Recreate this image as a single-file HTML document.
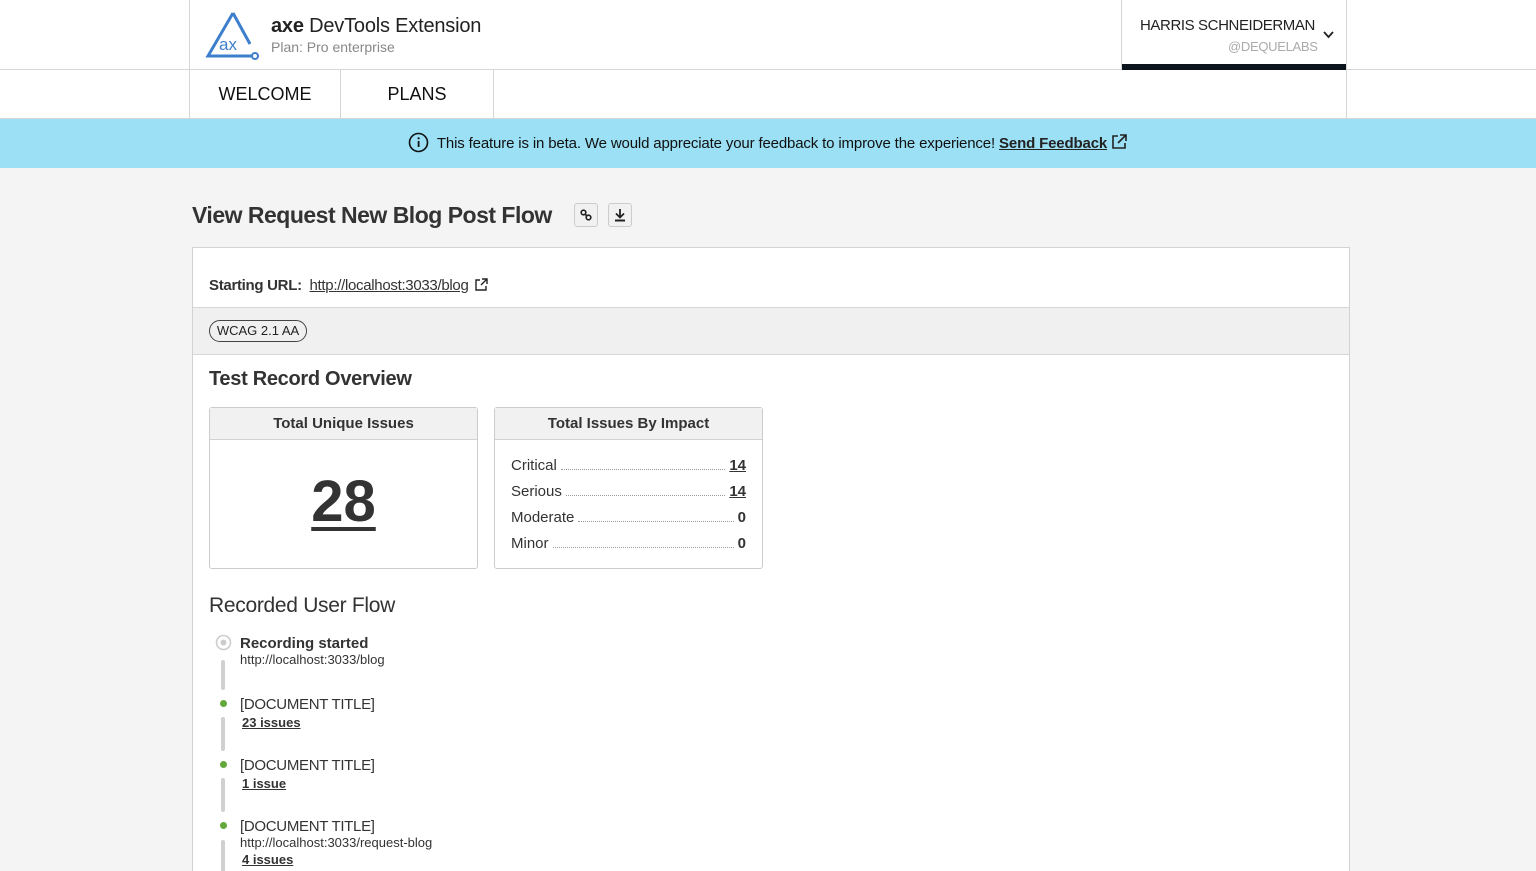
<!DOCTYPE html>
<html><head><meta charset="utf-8"><style>
*{box-sizing:border-box;margin:0;padding:0}
html{width:1536px;height:871px;overflow:hidden}
body{width:1536px;height:871px;overflow:hidden;background:#f4f4f4;font-family:"Liberation Sans",sans-serif;color:#222;position:relative}
.hdr{position:absolute;left:0;top:0;width:1536px;height:70px;background:#fff;border-bottom:1px solid #d6d6d6}
.nav{position:absolute;left:0;top:70px;width:1536px;height:49px;background:#fff}
.vl{position:absolute;width:1px;background:#d6d6d6}
.tab{position:absolute;top:70px;height:49px;line-height:49px;text-align:center;font-size:18px;color:#111;border-right:1px solid #d6d6d6}
.banner{position:absolute;top:119px;left:0;width:1536px;height:49px;background:#9be0f5;font-size:15px;line-height:49px;text-align:center;color:#111;letter-spacing:-0.15px}
.card{position:absolute;left:192px;top:247px;width:1158px;height:624px;background:#fff;border:1px solid #d2d2d2;border-bottom:none}
.box{position:absolute;top:407px;width:269px;height:162px;border:1px solid #ccc;border-radius:3px;background:#fff}
.box .h{height:32px;background:#f1f1f1;border-bottom:1px solid #d2d2d2;text-align:center;line-height:32px;font-weight:bold;font-size:15px;color:#333}
.row{position:absolute;font-size:15px;display:flex;align-items:baseline;color:#333}
.row .d{flex:1;border-bottom:1px dotted #999;margin:0 4px}
.row u{font-weight:bold}
.dot{position:absolute;width:7px;height:7px;border-radius:50%;background:#62a83a}
.ln{position:absolute;left:221px;width:4px;border-radius:2px;background:#d0d0d0}
.t{position:absolute;left:240px;font-size:15px;color:#333}
.s{position:absolute;left:240px;font-size:13px;color:#333}
.i{position:absolute;left:242px;font-size:13px;font-weight:bold;text-decoration:underline;color:#333}
.ib{position:absolute;top:203px;width:24px;height:24px;border:1px solid #ccc;border-radius:3px;background:#f1f1f1}
</style></head><body>
<div class="hdr"></div>
<div class="nav"></div>
<div class="vl" style="left:189px;top:0;height:119px"></div>
<div class="vl" style="left:1346px;top:0;height:119px"></div>
<div class="vl" style="left:1121px;top:0;height:70px"></div>
<div style="position:absolute;left:1122px;top:64px;width:224px;height:6px;background:#0b141c"></div>
<svg style="position:absolute;left:204px;top:10px" width="58" height="50" viewBox="0 0 58 50"><path d="M29 3 L4 46 L49 46" fill="none" stroke="#3d7fcc" stroke-width="3"/><path d="M29 3 L46 34" fill="none" stroke="#3d7fcc" stroke-width="3"/><circle cx="51" cy="46" r="3" fill="#fff" stroke="#3d7fcc" stroke-width="2"/><text x="15" y="40" font-family="Liberation Sans" font-size="17" fill="#3d7fcc">ax</text></svg>
<div style="position:absolute;left:271px;top:15px;font-size:20px;color:#222;letter-spacing:-0.2px"><b>axe</b> DevTools Extension</div>
<div style="position:absolute;left:271px;top:39px;font-size:14px;color:#888">Plan: Pro enterprise</div>
<div style="position:absolute;left:1140px;top:17px;font-size:15px;color:#222;letter-spacing:-0.4px">HARRIS SCHNEIDERMAN</div>
<div style="position:absolute;left:1228px;top:39px;font-size:13px;color:#aaa;letter-spacing:-0.3px">@DEQUELABS</div>
<svg style="position:absolute;left:1322px;top:30px" width="13" height="10"><path d="M2 2 L6.5 7 L11 2" fill="none" stroke="#222" stroke-width="1.8"/></svg>
<div class="tab" style="left:190px;width:151px">WELCOME</div>
<div class="tab" style="left:341px;width:153px">PLANS</div>
<div style="position:absolute;left:0;top:118px;width:1536px;height:1px;background:#d6d6d6"></div>
<div class="banner"><svg style="vertical-align:-5px;margin-right:8px" width="21" height="21"><circle cx="10.5" cy="10.5" r="9" fill="none" stroke="#111" stroke-width="1.6"/><rect x="9.7" y="9" width="1.8" height="6" fill="#111"/><circle cx="10.6" cy="6.3" r="1.1" fill="#111"/></svg>This feature is in beta. We would appreciate your feedback to improve the experience! <u style="font-weight:bold;color:#222">Send Feedback</u><svg style="vertical-align:-3px;margin-left:3px" width="18" height="18"><path d="M8 3H3v12h12v-5M10 2h6v6M16 2L8 10" fill="none" stroke="#222" stroke-width="1.6"/></svg></div>
<div style="position:absolute;left:192px;top:202px;font-size:23px;font-weight:bold;color:#333;letter-spacing:-0.5px">View Request New Blog Post Flow</div>
<div class="ib" style="left:574px"><svg width="22" height="22"><circle cx="8.5" cy="8.5" r="2.3" fill="none" stroke="#222" stroke-width="1.6"/><circle cx="13.5" cy="13.5" r="2.3" fill="none" stroke="#222" stroke-width="1.6"/><path d="M10 10L12 12" stroke="#222" stroke-width="1.6"/></svg></div>
<div class="ib" style="left:608px"><svg width="22" height="22"><path d="M11 5v8M7 9.5l4 4 4-4" fill="none" stroke="#222" stroke-width="1.8"/><rect x="6" y="15.5" width="10" height="2" fill="#222"/></svg></div>
<div class="card"></div>
<div style="position:absolute;left:209px;top:277px;font-size:15px;color:#333;letter-spacing:-0.3px"><b>Starting URL:</b>&nbsp; <u>http://localhost:3033/blog</u> <svg style="vertical-align:-2px;margin-left:2px" width="15" height="15"><path d="M6 3H2v10h10V9M8 2h5v5M13 2L7 8" fill="none" stroke="#222" stroke-width="1.4"/></svg></div>
<div style="position:absolute;left:193px;top:307px;width:1156px;height:48px;background:#f0f0f0;border-top:1px solid #d6d6d6;border-bottom:1px solid #d6d6d6"></div>
<div style="position:absolute;left:209px;top:320px;height:22px;width:98px;text-align:center;border:1px solid #444;border-radius:11px;font-size:13px;line-height:20px;color:#222">WCAG 2.1 AA</div>
<div style="position:absolute;left:209px;top:368px;font-size:20px;font-weight:bold;color:#333;letter-spacing:-0.3px">Test Record Overview</div>
<div class="box" style="left:209px"><div class="h">Total Unique Issues</div><div style="text-align:center;font-size:58px;font-weight:bold;color:#333;margin-top:28px;text-decoration:underline;text-decoration-thickness:4px;text-underline-offset:6px">28</div></div>
<div class="box" style="left:494px"><div class="h">Total Issues By Impact</div></div>
<div class="row" style="left:511px;width:235px;top:457px">Critical<span class="d"></span><u>14</u></div>
<div class="row" style="left:511px;width:235px;top:483px">Serious<span class="d"></span><u>14</u></div>
<div class="row" style="left:511px;width:235px;top:509px">Moderate<span class="d"></span><b>0</b></div>
<div class="row" style="left:511px;width:235px;top:535px">Minor<span class="d"></span><b>0</b></div>
<div style="position:absolute;left:209px;top:594px;font-size:21px;color:#333;letter-spacing:-0.3px">Recorded User Flow</div>
<svg style="position:absolute;left:215px;top:634px" width="17" height="17"><circle cx="8.5" cy="8.5" r="7" fill="none" stroke="#ccc" stroke-width="1.6"/><circle cx="8.5" cy="8.5" r="3" fill="#ccc"/></svg>
<div class="t" style="top:635px;font-weight:bold">Recording started</div>
<div class="s" style="top:652px">http://localhost:3033/blog</div>
<div class="ln" style="top:660px;height:30px"></div>
<div class="dot" style="left:220px;top:700px"></div>
<div class="t" style="top:696px;letter-spacing:-0.3px">[DOCUMENT TITLE]</div>
<div class="i" style="top:715px">23 issues</div>
<div class="ln" style="top:717px;height:34px"></div>
<div class="dot" style="left:220px;top:761px"></div>
<div class="t" style="top:757px;letter-spacing:-0.3px">[DOCUMENT TITLE]</div>
<div class="i" style="top:776px">1 issue</div>
<div class="ln" style="top:778px;height:34px"></div>
<div class="dot" style="left:220px;top:822px"></div>
<div class="t" style="top:818px;letter-spacing:-0.3px">[DOCUMENT TITLE]</div>
<div class="s" style="top:835px">http://localhost:3033/request-blog</div>
<div class="i" style="top:852px">4 issues</div>
<div class="ln" style="top:840px;height:40px"></div>
</body></html>
